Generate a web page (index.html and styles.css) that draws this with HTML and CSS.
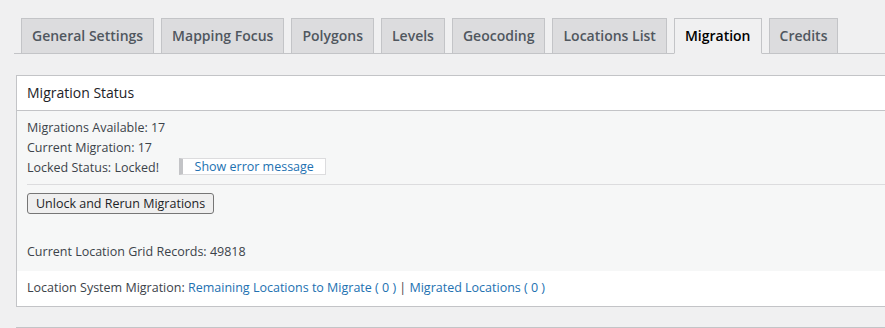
FILE: index.html
```html
<!DOCTYPE html>
<html lang="en">
  <head>
    <meta charset="UTF-8" />
    <meta name="viewport" content="width=device-width, initial-scale=1.0" />
    <title>Migration</title>
    <link rel="stylesheet" href="styles.css">
  </head>
  <body>
    <h2 class="nav-tab-wrapper">
      <a href="#" class="nav-tab">General Settings</a>
      <a href="#" class="nav-tab">Mapping Focus</a>
      <a href="#" class="nav-tab">Polygons</a>
      <a href="#" class="nav-tab">Levels</a>
      <a href="#" class="nav-tab">Geocoding</a>
      <a href="#" class="nav-tab">Locations List</a>
      <a href="#" class="nav-tab nav-tab-active">Migration</a>
      <a href="#" class="nav-tab">Credits</a>
    </h2>

    <!-- Migration Status -->
    <div class="postbox">
      <div class="postbox-header">Migration Status</div>
      <div class="inside">
        <div class="line">Migrations Available: 17</div>
        <div class="line">Current Migration: 17</div>
        <div class="line">
          Locked Status: Locked!
          <button class="error-toggle">Show error message</button>
        </div>
        <hr />
        <button class="button">Unlock and Rerun Migrations</button>
        <div class="line records">Current Location Grid Records: 49818</div>
      </div>
      <div class="postbox-footer">
        Location System Migration:
        <a href="#">Remaining Locations to Migrate ( 0 )</a> |
        <a href="#">Migrated Locations ( 0 )</a>
      </div>
    </div>

    <div class="postbox postbox-next"></div>
  </body>
</html>
```
FILE: styles.css
```css
html,
body {
  height: 100%;
}
body {
  font-family: "Open Sans", sans-serif;
  font-size: 12.5px;
  margin: 0;
  background-color: #f0f0f1;
  color: #3c434a;
  overflow: hidden;
}
a {
  color: #2271b1;
  text-decoration: none;
}
/* Tabs */
.nav-tab-wrapper {
  display: flex;
  margin: 0 0 0 14px;
  padding: 18px 0 0;
  border-bottom: 1px solid #c3c4c7;
  font-size: 14px;
  font-weight: 600;
}
.nav-tab {
  margin-left: 7px;
  padding: 5px 10px;
  line-height: 24px;
  border: 1px solid #c3c4c7;
  border-bottom: none;
  background-color: #dcdcde;
  color: #50575e;
}
.nav-tab-active {
  background-color: #f0f0f1;
  color: #000;
  margin-bottom: -1px;
  border-bottom: 1px solid #f0f0f1;
}
/* Box */
.postbox {
  margin: 21px -20px 0 16px;
  border: 1px solid #c3c4c7;
  background-color: #fff;
}
.postbox-next {
  margin-top: 20px;
  border-bottom: none;
}
.postbox-header {
  font-size: 14px;
  line-height: 20px;
  padding: 7px 10px;
  border-bottom: 1px solid #c3c4c7;
  color: #1d2327;
}
.inside {
  background-color: #f6f7f7;
  padding: 7px 0 9px 10px;
}
.line {
  line-height: 20px;
}
.error-toggle {
  width: 147px;
  height: 17px;
  margin-left: 17px;
  padding: 0;
  vertical-align: top;
  border: 1px solid #dcdcde;
  border-left: 4px solid #c3c4c7;
  background-color: #fff;
  color: #2271b1;
  font-family: inherit;
  font-size: 12.5px;
  line-height: 15px;
  cursor: pointer;
}
hr {
  margin: 6px 0 8px;
  border: 0;
  border-top: 1px solid #dcdcde;
}
.button {
  display: block;
  height: 21px;
  padding: 0 8px;
  border: 1px solid #767676;
  border-radius: 3px;
  background-color: #efefef;
  color: #1d2327;
  font-family: inherit;
  font-size: 12.5px;
  line-height: 19px;
  cursor: pointer;
}
.records {
  margin-top: 28px;
}
.postbox-footer {
  padding: 7px 10px 8px;
  line-height: 20px;
}
```
